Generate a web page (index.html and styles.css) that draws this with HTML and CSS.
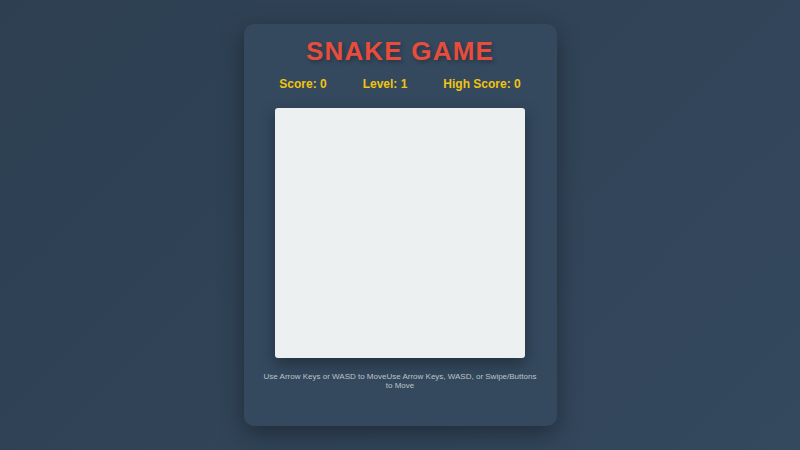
FILE: index.html
```html
<!DOCTYPE html>
<html>
  <head>
    <title>Snake Game</title>
    <link rel="stylesheet" href="styles.css">
  </head>
  <body>
    <div class="game-container">
      <h1 class="title">SNAKE GAME</h1>
      <div class="stats">
        <span id="score">Score: 0</span>
        <span id="level">Level: 1</span>
        <span id="high_score">High Score: 0</span>
      </div>
      <canvas id="board" width="250" height="250"></canvas>
      <p class="instructions">Use Arrow Keys or WASD to MoveUse Arrow Keys, WASD, or Swipe/Buttons to Move</p>
    </div>
  </body>
</html>
```

FILE: styles.css
```css
* {
  margin: 0px;
  padding: 0px;
  box-sizing: border-box;
}

body {
  font-family: "Liberation Sans", Arial, sans-serif;
  background: linear-gradient(135deg, #2d3f51, #34485e);
  min-height: 100vh;
  display: flex;
  align-items: center;
  justify-content: center;
}

.game-container {
  width: 313px;
  height: 402px;
  background-color: #34495e;
  border-radius: 10px;
  box-shadow: 0px 8px 24px rgba(0, 0, 0, 0.35);
  padding: 12px 16px 20px;
  display: flex;
  flex-direction: column;
  align-items: center;
}

.title {
  font-size: 26px;
  font-weight: bold;
  letter-spacing: 1.2px;
  color: #e74c3c;
  text-shadow: 2px 2px 4px rgba(0, 0, 0, 0.3);
  line-height: 30px;
}

.stats {
  display: flex;
  justify-content: center;
  gap: 36px;
  margin-top: 11px;
  font-size: 12px;
  font-weight: bold;
  color: #f1c40f;
}

#board {
  display: block;
  margin-top: 17px;
  width: 250px;
  height: 250px;
  background-color: #ecf0f1;
  border-radius: 3px;
  box-shadow: 0px 6px 16px rgba(0, 0, 0, 0.35);
}

.instructions {
  margin-top: 14px;
  font-size: 8px;
  line-height: 9px;
  color: #bdc3c7;
  text-align: center;
}
```
